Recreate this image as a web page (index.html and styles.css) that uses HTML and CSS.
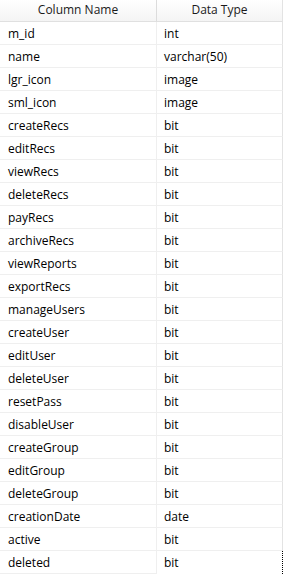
FILE: index.html
```html
<!DOCTYPE html>
<html>
<head>
<meta charset="utf-8">
<link rel="stylesheet" href="styles.css">
</head>
<body>
<div class="grid">
  <div class="hd">Column Name</div><div class="hd last">Data Type</div>
  <div class="c">m_id</div><div class="c t">int</div>
  <div class="c">name</div><div class="c t">varchar(50)</div>
  <div class="c">lgr_icon</div><div class="c t">image</div>
  <div class="c">sml_icon</div><div class="c t">image</div>
  <div class="c">createRecs</div><div class="c t">bit</div>
  <div class="c">editRecs</div><div class="c t">bit</div>
  <div class="c">viewRecs</div><div class="c t">bit</div>
  <div class="c">deleteRecs</div><div class="c t">bit</div>
  <div class="c">payRecs</div><div class="c t">bit</div>
  <div class="c">archiveRecs</div><div class="c t">bit</div>
  <div class="c">viewReports</div><div class="c t">bit</div>
  <div class="c">exportRecs</div><div class="c t">bit</div>
  <div class="c">manageUsers</div><div class="c t">bit</div>
  <div class="c">createUser</div><div class="c t">bit</div>
  <div class="c">editUser</div><div class="c t">bit</div>
  <div class="c">deleteUser</div><div class="c t">bit</div>
  <div class="c">resetPass</div><div class="c t">bit</div>
  <div class="c">disableUser</div><div class="c t">bit</div>
  <div class="c">createGroup</div><div class="c t">bit</div>
  <div class="c">editGroup</div><div class="c t">bit</div>
  <div class="c">deleteGroup</div><div class="c t">bit</div>
  <div class="c">creationDate</div><div class="c t">date</div>
  <div class="c">active</div><div class="c t">bit</div>
  <div class="c">deleted</div><div class="c t focus">bit</div>
</div>
</body>
</html>
```

FILE: styles.css
```css
html, body {
  margin: 0;
  padding: 0;
  background: #ffffff;
}
body {
  font-family: "Open Sans", "Noto Sans", sans-serif;
  font-size: 12px;
  color: #000000;
}
.grid {
  display: grid;
  grid-template-columns: 157px 126px;
  grid-template-rows: 22px;
  grid-auto-rows: 23px;
  width: 283px;
}
.hd {
  display: flex;
  align-items: center;
  justify-content: center;
  background: linear-gradient(#ffffff, #f4f4f4);
  border-right: 1px solid #dcdcdc;
  border-bottom: 1px solid #e0e0e0;
  color: #1a1a1a;
  box-sizing: border-box;
  padding-bottom: 2px;
}
.hd.last {
  border-right: 1px solid #e3e3e3;
}
.c {
  display: flex;
  align-items: center;
  padding-left: 8px;
  border-bottom: 1px solid #efefef;
  border-right: 1px solid #efefef;
  box-sizing: border-box;
}
.c.t {
  padding-left: 7px;
  border-right: 1px solid #e3e3e3;
}
.c.t.focus {
  border-right: 1px dotted #000000;
  border-bottom: none;
}
```
